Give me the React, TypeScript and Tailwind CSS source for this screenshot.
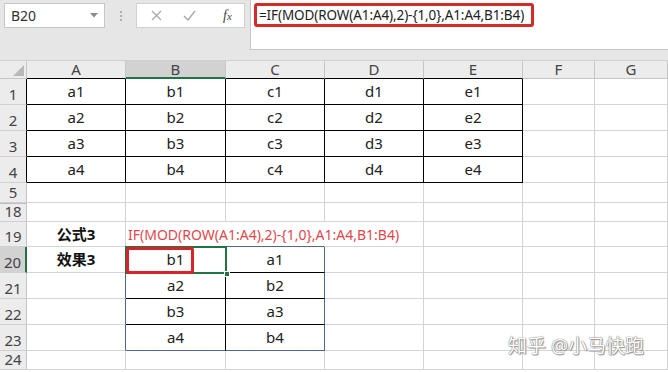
import React from 'react';

const colWidths = ['w-[99px]', 'w-[100px]', 'w-[99px]', 'w-[99px]', 'w-[99px]', 'w-[72px]', 'w-[73px]'];
const letters = ['A', 'B', 'C', 'D', 'E', 'F', 'G'];

type Row = { label: string; h: string; cells: string[] };

const rows: Row[] = [
  { label: '1', h: 'h-[26px]', cells: ['a1', 'b1', 'c1', 'd1', 'e1', '', ''] },
  { label: '2', h: 'h-[26px]', cells: ['a2', 'b2', 'c2', 'd2', 'e2', '', ''] },
  { label: '3', h: 'h-[26px]', cells: ['a3', 'b3', 'c3', 'd3', 'e3', '', ''] },
  { label: '4', h: 'h-[26px]', cells: ['a4', 'b4', 'c4', 'd4', 'e4', '', ''] },
  { label: '5', h: 'h-[20px]', cells: ['', '', '', '', '', '', ''] },
  { label: '18', h: 'h-[19px]', cells: ['', '', '', '', '', '', ''] },
  { label: '19', h: 'h-[25px]', cells: ['公式3', '', '', '', '', '', ''] },
  { label: '20', h: 'h-[26px]', cells: ['效果3', 'b1', 'a1', '', '', '', ''] },
  { label: '21', h: 'h-[26px]', cells: ['', 'a2', 'b2', '', '', '', ''] },
  { label: '22', h: 'h-[26px]', cells: ['', 'b3', 'a3', '', '', '', ''] },
  { label: '23', h: 'h-[26px]', cells: ['', 'a4', 'b4', '', '', '', ''] },
  { label: '24', h: 'h-[19px]', cells: ['', '', '', '', '', '', ''] },
];

// right / bottom border colour of every cell
function edge(label: string, c: number): { r: string; b: string } {
  const n = Number(label);
  let r = 'border-r-[#d4d4d4]';
  let b = 'border-b-[#d4d4d4]';
  if (n >= 1 && n <= 4 && c <= 4) {
    r = 'border-r-black';
    b = 'border-b-black';
  }
  if (n === 19 && (c === 1 || c === 2)) {
    b = 'border-b-[#4d6a88]';
    r = 'border-r-white';
  }
  if (n >= 20 && n <= 23) {
    if (c === 0) r = 'border-r-[#4d6a88]';
    if (c === 1) {
      r = 'border-r-black';
      b = n === 23 ? 'border-b-[#4d6a88]' : 'border-b-black';
    }
    if (c === 2) {
      r = 'border-r-[#4d6a88]';
      b = n === 23 ? 'border-b-[#4d6a88]' : 'border-b-black';
    }
  }
  return { r, b };
}

function RowHead({ label, h }: { label: string; h: string }) {
  const n = Number(label);
  let cls = 'bg-[#ececec] border-r border-r-[#c6c6c6] text-[#444]';
  if (n >= 1 && n <= 4) cls = 'bg-[#ececec] border-r border-r-black text-[#444]';
  if (n === 20) cls = 'bg-[#d2d2d2] border-r-2 border-r-[#217346] text-[#444]';
  if (n === 18) cls = 'bg-[#ececec] border-r border-r-[#c6c6c6] border-t border-t-[#bdbdbd] text-[#444]';
  return (
    <div
      className={`${h} w-[27px] shrink-0 border-b border-b-[#d0d0d0] flex items-end justify-center text-[15px] leading-[18px] pb-[1px] ${cls}`}
    >
      {label}
    </div>
  );
}

function Cell({ row, c }: { row: Row; c: number }) {
  const { r, b } = edge(row.label, c);
  const text = row.cells[c];
  const bold = row.label === '19' || row.label === '20' ? c === 0 : false;
  return (
    <div
      className={`${row.h} ${colWidths[c]} shrink-0 border-r border-b ${r} ${b} flex items-center justify-center text-[15px] text-[#222] whitespace-nowrap`}
    >
      {row.label === '19' && c === 1 ? (
        <span className="self-center w-full pl-[2px] text-[14px] text-[#e0474c] overflow-visible">
          IF(MOD(ROW(A1:A4),2)-{'{'}1,0{'}'},A1:A4,B1:B4)
        </span>
      ) : (
        <span className={bold ? 'font-bold text-[#111]' : ''}>{text}</span>
      )}
    </div>
  );
}

export default function App() {
  return (
    <div
      className="relative w-[668px] h-[372px] overflow-hidden bg-white"
      style={{ fontFamily: '"Noto Sans", "Noto Sans CJK SC", sans-serif' }}
    >
      {/* formula bar */}
      <div className="h-[61px] bg-[#e6e6e6] flex items-start border-b border-b-[#d0d0d0]">
        <div className="mt-[3px] ml-[4px] w-[101px] h-[25px] bg-white border border-[#c6c6c6] flex items-center justify-between pl-[6px] pr-[6px]">
          <span className="text-[14px] text-[#333]">B20</span>
          <svg width="8" height="5" viewBox="0 0 8 5">
            <path d="M0 0 L8 0 L4 4.5 Z" fill="#8a8a8a" />
          </svg>
        </div>
        <div className="w-[31px] h-[31px] flex flex-col items-center justify-center gap-[2px]">
          <span className="w-[2px] h-[2px] bg-[#b0b0b0]" />
          <span className="w-[2px] h-[2px] bg-[#b0b0b0]" />
          <span className="w-[2px] h-[2px] bg-[#b0b0b0]" />
        </div>
        <div className="mt-[3px] w-[109px] h-[25px] bg-white border border-[#d0d0d0] flex items-center">
          <svg className="ml-[14px]" width="11" height="11" viewBox="0 0 11 11">
            <path d="M1 1 L10 10 M10 1 L1 10" stroke="#a9a9a9" strokeWidth="1.3" />
          </svg>
          <svg className="ml-[21px]" width="13" height="11" viewBox="0 0 13 11">
            <path d="M1 6 L5 10 L12 1" stroke="#a9a9a9" strokeWidth="1.4" fill="none" />
          </svg>
          <span
            className="ml-[27px] text-[14px] italic text-[#444]"
            style={{ fontFamily: '"Liberation Serif", serif' }}
          >
            f<span className="text-[11px]">x</span>
          </span>
        </div>
        <div className="ml-[5px] flex-1 h-[50px] bg-white border-l border-b border-[#c6c6c6] pt-[3px] pl-[3px]">
          <div className="w-[280px] h-[24px] border-[3px] border-[#d42a2a] rounded-[3px] flex items-center pl-[2px] text-[13.5px] tracking-[-0.1px] text-[#222] whitespace-nowrap">
            =IF(MOD(ROW(A1:A4),2)-{'{'}1,0{'}'},A1:A4,B1:B4)
          </div>
        </div>
      </div>

      {/* column headers */}
      <div className="flex h-[18px]">
        <div className="w-[27px] h-[18px] shrink-0 bg-[#ececec] border-r border-b border-[#c6c6c6] flex items-end justify-end pr-[2px] pb-[2px]">
          <svg width="11" height="11" viewBox="0 0 11 11">
            <path d="M11 0 L11 11 L0 11 Z" fill="#b8b8b8" />
          </svg>
        </div>
        {letters.map((l, i) => (
          <div
            key={l}
            className={`${colWidths[i]} h-[18px] shrink-0 border-r border-r-[#c6c6c6] flex items-center justify-center text-[15px] text-[#444] ${
              i === 1
                ? 'bg-[#d2d2d2] border-b-2 border-b-[#217346]'
                : i <= 4
                  ? 'bg-[#ececec] border-b border-b-black'
                  : 'bg-[#ececec] border-b border-b-[#c6c6c6]'
            }`}
          >
            {l}
          </div>
        ))}
      </div>

      {/* rows */}
      {rows.map((row) => (
        <div key={row.label} className="flex">
          <RowHead label={row.label} h={row.h} />
          {row.cells.map((_, c) => (
            <Cell key={c} row={row} c={c} />
          ))}
        </div>
      ))}

      {/* selection of B20 */}
      <div className="absolute left-[125px] top-[246px] w-[102px] h-[28px] border-2 border-[#217346]" />
      <div className="absolute left-[224px] top-[271px] w-[6px] h-[6px] bg-[#217346] border border-white" />
      {/* red highlight */}
      <div className="absolute left-[126px] top-[247px] w-[68px] h-[27px] border-[3px] border-[#d9232a] rounded-[3px]" />

      {/* watermark */}
      <div
        className="absolute left-[508px] top-[332px] text-[19px] text-white"
        style={{ textShadow: '0 0 1px #777, 0 0 1px #777, 1px 1px 1px #999' }}
      >
        知乎 @小马快跑
      </div>
    </div>
  );
}
